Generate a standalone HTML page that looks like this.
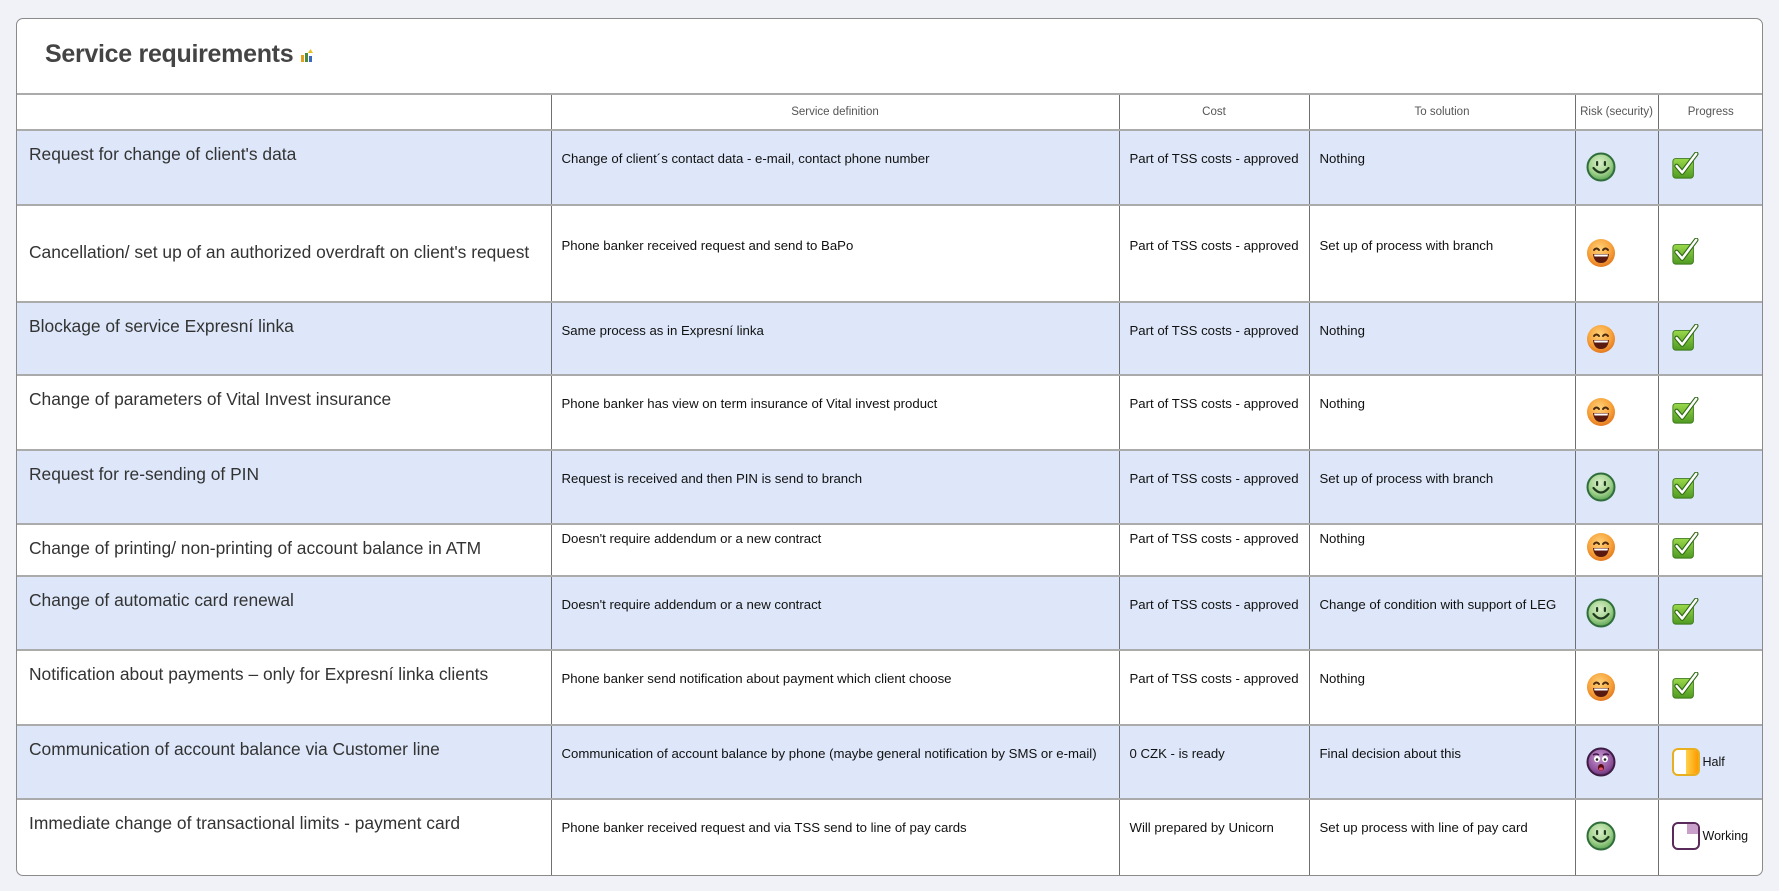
<!DOCTYPE html>
<html><head><meta charset="utf-8"><style>
body{margin:0;background:#f0f2f7;width:1779px;height:891px;overflow:hidden;font-family:"Liberation Sans",sans-serif;}
.card{position:absolute;left:16px;top:18px;width:1745px;height:856px;background:#fff;border:1px solid #8a8a8a;border-radius:7px;overflow:hidden;}
h1{position:absolute;left:28px;top:21px;margin:0;font-size:25px;font-weight:bold;color:#444;letter-spacing:-0.3px;}
table{position:absolute;left:0;top:74px;border-collapse:collapse;table-layout:fixed;width:1746px;}
td{border-top:2px solid #ababab;border-left:1px solid #707070;vertical-align:top;padding:0;color:#111;font-size:13.2px;line-height:18px;}
td:first-child{border-left:none;}
tr.h td{height:34px;text-align:center;vertical-align:middle;color:#555;font-size:11.5px;}
tr.b td{background:#dde7f9;}
td.n{font-size:17.4px;line-height:20px;color:#333;padding:13px 0 0 12px;}
td.d{padding:19px 0 0 10px;}
td.i{padding:21px 0 0 10px;}
td.p{padding:21px 0 0 12px;}
tr.r2 td.d{padding-top:31px;} tr.r2 td.i,tr.r2 td.p{padding-top:32px;} tr.r2 td.n{padding-top:36px;}
tr.r6 td.d{padding-top:5px;} tr.r6 td.i,tr.r6 td.p{padding-top:7px;}
.pl{display:flex;align-items:center;gap:2px;font-size:12.5px;}
</style></head><body>
<svg width="0" height="0" style="position:absolute">
<defs>
<radialGradient id="gg" cx="45%" cy="35%" r="70%"><stop offset="0" stop-color="#d9efc8"/><stop offset=".6" stop-color="#9fd08a"/><stop offset="1" stop-color="#4d9a4a"/></radialGradient>
<radialGradient id="og" cx="45%" cy="35%" r="70%"><stop offset="0" stop-color="#ffd27a"/><stop offset=".6" stop-color="#f7a23a"/><stop offset="1" stop-color="#e0701a"/></radialGradient>
<radialGradient id="pg" cx="45%" cy="35%" r="70%"><stop offset="0" stop-color="#c79ad0"/><stop offset=".7" stop-color="#8d4f9a"/><stop offset="1" stop-color="#5a2a66"/></radialGradient>
<linearGradient id="cg" x1="0" y1="0" x2="0" y2="1"><stop offset="0" stop-color="#9ad84a"/><stop offset="1" stop-color="#4f9a22"/></linearGradient>
<linearGradient id="hg" x1="0" y1="0" x2="1" y2="0"><stop offset="0" stop-color="#ffd24a"/><stop offset="1" stop-color="#ff9a00"/></linearGradient>
<symbol id="sm" viewBox="0 0 30 30"><circle cx="15" cy="15" r="13.5" fill="url(#gg)" stroke="#2f6e3a" stroke-width="2"/><rect x="10" y="9" width="2.2" height="5" rx="1" fill="#1f3a1f"/><rect x="17.8" y="9" width="2.2" height="5" rx="1" fill="#1f3a1f"/><path d="M7.5 16 Q15 25 22.5 16" fill="none" stroke="#1f3a1f" stroke-width="2.2" stroke-linecap="round"/></symbol>
<symbol id="lg" viewBox="0 0 30 30"><circle cx="15" cy="15" r="14" fill="url(#og)"/><path d="M8 12 Q10.5 9 13 12 M17 12 Q19.5 9 22 12" fill="none" stroke="#4a2a10" stroke-width="2" stroke-linecap="round"/><path d="M7 16 H23 Q22 25 15 25 Q8 25 7 16Z" fill="#5a1a10"/><path d="M8 16.5 H22 L21.5 18.5 H8.5Z" fill="#fff"/></symbol>
<symbol id="ps" viewBox="0 0 30 30"><circle cx="15" cy="15" r="13.5" fill="url(#pg)" stroke="#3d1b45" stroke-width="2"/><ellipse cx="11" cy="12" rx="3" ry="3.2" fill="#fff"/><ellipse cx="19" cy="12" rx="3" ry="3.2" fill="#fff"/><circle cx="11" cy="12.5" r="1.3" fill="#222"/><circle cx="19" cy="12.5" r="1.3" fill="#222"/><path d="M7 8 Q10 6 13 8 M17 8 Q20 6 23 8" fill="none" stroke="#3d1b45" stroke-width="1.4"/><ellipse cx="15" cy="20.5" rx="3" ry="3.5" fill="#5a0a10"/><ellipse cx="15" cy="22" rx="2" ry="1.6" fill="#e0506a"/></symbol>
<symbol id="ck" viewBox="0 0 30 30"><rect x="2" y="7" width="22" height="21" rx="3" fill="url(#cg)" stroke="#3a7a1a" stroke-width="1"/><path d="M6 15 L12 22 L27 2" fill="none" stroke="#2e6a12" stroke-width="5" stroke-linejoin="round" stroke-linecap="round"/><path d="M6 15 L12 22 L27 2" fill="none" stroke="#fff" stroke-width="2.6" stroke-linejoin="round" stroke-linecap="round"/></symbol>
<symbol id="hf" viewBox="0 0 30 30"><rect x="2" y="2" width="26" height="26" rx="5" fill="#fff" stroke="#e8b020" stroke-width="2"/><path d="M15 3 H23 Q27 3 27 7 V23 Q27 27 23 27 H15Z" fill="url(#hg)"/></symbol>
<symbol id="wk" viewBox="0 0 30 30"><rect x="2" y="2" width="26" height="26" rx="5" fill="#fff" stroke="#5a2a5a" stroke-width="2"/><path d="M16 3 H23 Q27 3 27 7 V13 H16Z" fill="#c9a0c9"/></symbol>
</defs></svg>
<div class="card">
<h1>Service requirements <svg width="14" height="13" viewBox="0 0 14 13"><rect x="1" y="6" width="3" height="7" fill="#e0a020"/><rect x="5" y="4" width="3" height="9" fill="#4a8a3a"/><rect x="9" y="7" width="3" height="6" fill="#3a6ac0"/><path d="M10.5 0 L13 4 H8Z" fill="#e8c020"/></svg></h1>
<table>
<colgroup><col style="width:534px"><col style="width:568px"><col style="width:190px"><col style="width:266px"><col style="width:83px"><col style="width:105px"></colgroup>
<tr class="h"><td></td><td>Service definition</td><td>Cost</td><td>To solution</td><td>Risk (security)</td><td>Progress</td></tr>
<tr class="b" style="height:75px"><td class="n">Request for change of client's data</td><td class="d">Change of client´s contact data - e-mail, contact phone number</td><td class="d">Part of TSS costs - approved</td><td class="d">Nothing</td><td class="i"><svg width="30" height="30"><use href="#sm"/></svg></td><td class="p"><svg width="28" height="28"><use href="#ck"/></svg></td></tr>
<tr class="r2" style="height:97px"><td class="n">Cancellation/ set up of an authorized overdraft on client's request</td><td class="d">Phone banker received request and send to BaPo</td><td class="d">Part of TSS costs - approved</td><td class="d">Set up of process with branch</td><td class="i"><svg width="30" height="30"><use href="#lg"/></svg></td><td class="p"><svg width="28" height="28"><use href="#ck"/></svg></td></tr>
<tr class="b" style="height:73px"><td class="n">Blockage of service Expresní linka</td><td class="d">Same process as in Expresní linka</td><td class="d">Part of TSS costs - approved</td><td class="d">Nothing</td><td class="i"><svg width="30" height="30"><use href="#lg"/></svg></td><td class="p"><svg width="28" height="28"><use href="#ck"/></svg></td></tr>
<tr style="height:75px"><td class="n">Change of parameters of Vital Invest insurance</td><td class="d">Phone banker has view on term insurance of Vital invest product</td><td class="d">Part of TSS costs - approved</td><td class="d">Nothing</td><td class="i"><svg width="30" height="30"><use href="#lg"/></svg></td><td class="p"><svg width="28" height="28"><use href="#ck"/></svg></td></tr>
<tr class="b" style="height:74px"><td class="n">Request for re-sending of PIN</td><td class="d">Request is received and then PIN is send to branch</td><td class="d">Part of TSS costs - approved</td><td class="d">Set up of process with branch</td><td class="i"><svg width="30" height="30"><use href="#sm"/></svg></td><td class="p"><svg width="28" height="28"><use href="#ck"/></svg></td></tr>
<tr class="r6" style="height:52px"><td class="n">Change of printing/ non-printing of account balance in ATM</td><td class="d">Doesn't require addendum or a new contract</td><td class="d">Part of TSS costs - approved</td><td class="d">Nothing</td><td class="i"><svg width="30" height="30"><use href="#lg"/></svg></td><td class="p"><svg width="28" height="28"><use href="#ck"/></svg></td></tr>
<tr class="b" style="height:74px"><td class="n">Change of automatic card renewal</td><td class="d">Doesn't require addendum or a new contract</td><td class="d">Part of TSS costs - approved</td><td class="d">Change of condition with support of LEG</td><td class="i"><svg width="30" height="30"><use href="#sm"/></svg></td><td class="p"><svg width="28" height="28"><use href="#ck"/></svg></td></tr>
<tr style="height:75px"><td class="n">Notification about payments – only for Expresní linka clients</td><td class="d">Phone banker send notification about payment which client choose</td><td class="d">Part of TSS costs - approved</td><td class="d">Nothing</td><td class="i"><svg width="30" height="30"><use href="#lg"/></svg></td><td class="p"><svg width="28" height="28"><use href="#ck"/></svg></td></tr>
<tr class="b" style="height:74px"><td class="n">Communication of account balance via Customer line</td><td class="d">Communication of account balance by phone (maybe general notification by SMS or e-mail)</td><td class="d">0 CZK - is ready</td><td class="d">Final decision about this</td><td class="i"><svg width="30" height="30"><use href="#ps"/></svg></td><td class="p"><div class="pl"><svg width="30" height="30"><use href="#hf"/></svg>Half</div></td></tr>
<tr style="height:77px"><td class="n">Immediate change of transactional limits - payment card</td><td class="d">Phone banker received request and via TSS send to line of pay cards</td><td class="d">Will prepared by Unicorn</td><td class="d">Set up process with line of pay card</td><td class="i"><svg width="30" height="30"><use href="#sm"/></svg></td><td class="p"><div class="pl"><svg width="30" height="30"><use href="#wk"/></svg>Working</div></td></tr>
</table>
</div>
</body></html>
